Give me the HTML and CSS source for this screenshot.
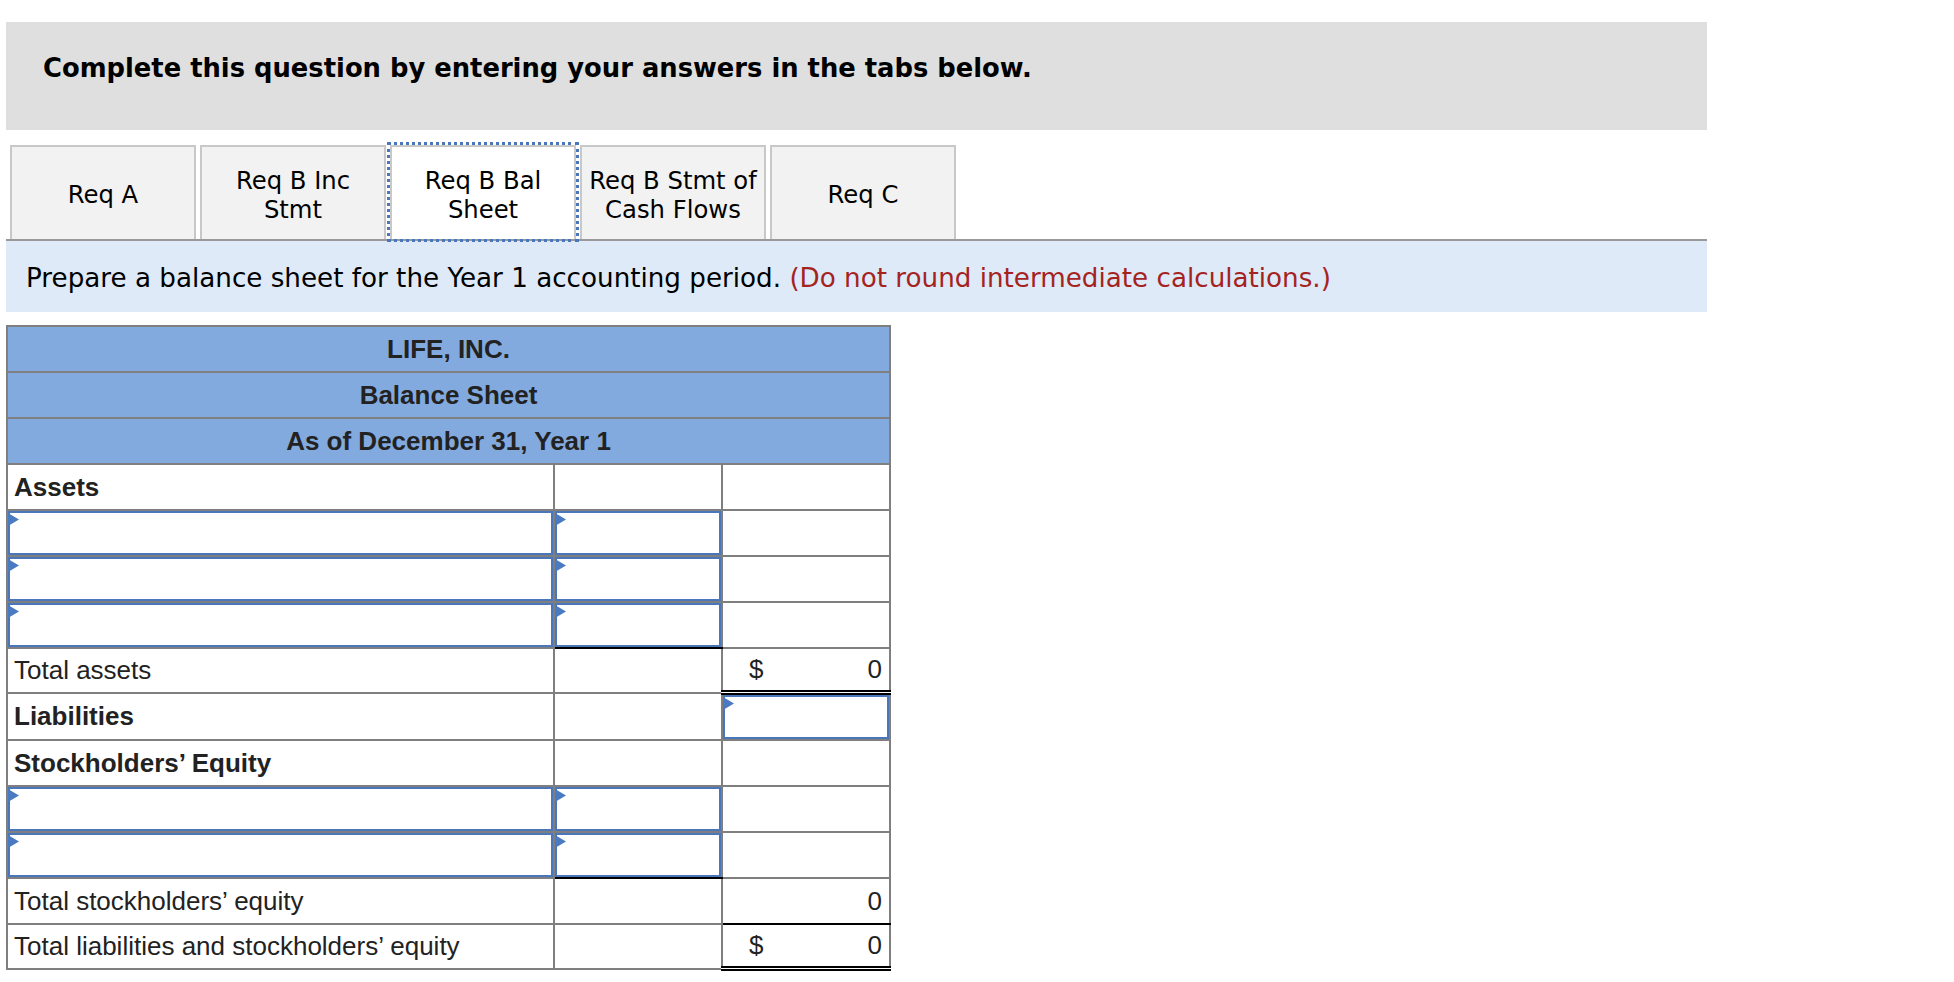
FILE: index.html
```html
<!DOCTYPE html>
<html lang="en">
<head>
<meta charset="utf-8">
<title>Balance Sheet</title>
<link rel="stylesheet" href="styles.css">
</head>
<body>
<div class="page">
  <div class="banner">
    <h1 class="title">Complete this question by entering your answers in the tabs below.</h1>
  </div>

  <div class="tabs">
    <div class="tab">Req A</div>
    <div class="tab">Req B Inc<br>Stmt</div>
    <div class="tab active">Req B Bal<br>Sheet</div>
    <div class="tab">Req B Stmt of<br>Cash Flows</div>
    <div class="tab">Req C</div>
  </div>

  <div class="instr">Prepare a balance sheet for the Year 1 accounting period.&nbsp;<span class="red">(Do not round intermediate calculations.)</span></div>

  <table class="bs">
    <colgroup>
      <col class="c1">
      <col class="c2">
      <col class="c3">
    </colgroup>
    <tr><td class="hd" colspan="3">LIFE, INC.</td></tr>
    <tr><td class="hd" colspan="3">Balance Sheet</td></tr>
    <tr><td class="hd" colspan="3">As of December 31, Year 1</td></tr>

    <tr><td class="lbl b">Assets</td><td></td><td></td></tr>
    <tr>
      <td class="in"><div class="box"><svg class="tri" width="11" height="13" viewBox="0 0 11 13"><polygon points="0,0 11,6.5 0,13"/></svg></div></td>
      <td class="in"><div class="box"><svg class="tri" width="11" height="13" viewBox="0 0 11 13"><polygon points="0,0 11,6.5 0,13"/></svg></div></td>
      <td></td>
    </tr>
    <tr>
      <td class="in"><div class="box"><svg class="tri" width="11" height="13" viewBox="0 0 11 13"><polygon points="0,0 11,6.5 0,13"/></svg></div></td>
      <td class="in"><div class="box"><svg class="tri" width="11" height="13" viewBox="0 0 11 13"><polygon points="0,0 11,6.5 0,13"/></svg></div></td>
      <td></td>
    </tr>
    <tr>
      <td class="in"><div class="box"><svg class="tri" width="11" height="13" viewBox="0 0 11 13"><polygon points="0,0 11,6.5 0,13"/></svg></div></td>
      <td class="in ulb"><div class="box"><svg class="tri" width="11" height="13" viewBox="0 0 11 13"><polygon points="0,0 11,6.5 0,13"/></svg></div></td>
      <td></td>
    </tr>
    <tr class="tot">
      <td class="lbl">Total assets</td>
      <td></td>
      <td class="amt dbl"><div class="amtrow"><span>$</span><span>0</span></div></td>
    </tr>
    <tr>
      <td class="lbl b">Liabilities</td>
      <td></td>
      <td class="in"><div class="box"><svg class="tri" width="11" height="13" viewBox="0 0 11 13"><polygon points="0,0 11,6.5 0,13"/></svg></div></td>
    </tr>
    <tr><td class="lbl b">Stockholders’ Equity</td><td></td><td></td></tr>
    <tr>
      <td class="in"><div class="box"><svg class="tri" width="11" height="13" viewBox="0 0 11 13"><polygon points="0,0 11,6.5 0,13"/></svg></div></td>
      <td class="in"><div class="box"><svg class="tri" width="11" height="13" viewBox="0 0 11 13"><polygon points="0,0 11,6.5 0,13"/></svg></div></td>
      <td></td>
    </tr>
    <tr>
      <td class="in"><div class="box"><svg class="tri" width="11" height="13" viewBox="0 0 11 13"><polygon points="0,0 11,6.5 0,13"/></svg></div></td>
      <td class="in ulb"><div class="box"><svg class="tri" width="11" height="13" viewBox="0 0 11 13"><polygon points="0,0 11,6.5 0,13"/></svg></div></td>
      <td></td>
    </tr>
    <tr>
      <td class="lbl">Total stockholders’ equity</td>
      <td></td>
      <td class="amt ulb"><div class="amtrow end"><span>0</span></div></td>
    </tr>
    <tr class="tot">
      <td class="lbl">Total liabilities and stockholders’ equity</td>
      <td></td>
      <td class="amt dbl"><div class="amtrow"><span>$</span><span>0</span></div></td>
    </tr>
  </table>
</div>
</body>
</html>
```

FILE: styles.css
```css
* { box-sizing: border-box; }

html, body {
  margin: 0;
  background: #ffffff;
}

.page {
  width: 1707px;
  padding: 22px 0 0 6px;
}

.banner {
  height: 108px;
  background: #dfdfdf;
  padding: 31px 0 0 37px;
}

.title {
  margin: 0;
  font-family: "DejaVu Sans", Verdana, sans-serif;
  font-weight: bold;
  font-size: 25.8px;
  line-height: 30px;
  color: #000;
}

.tabs {
  margin-top: 15px;
  display: flex;
  gap: 4px;
  padding-left: 4px;
  border-bottom: 2px solid #999999;
}

.tab {
  width: 186px;
  height: 94px;
  border: 2px solid #c8c8c8;
  border-bottom: 0;
  background: #f2f2f2;
  padding-top: 3px;
  display: flex;
  align-items: center;
  justify-content: center;
  text-align: center;
  font-family: "DejaVu Sans", Verdana, sans-serif;
  font-size: 24.3px;
  line-height: 29px;
  color: #000;
}

.tab.active {
  background: #ffffff;
  outline: 3px dotted #4a76bb;
}

.instr {
  height: 71px;
  background: #deeaf7;
  padding: 2px 0 0 20px;
  display: flex;
  align-items: center;
  font-family: "DejaVu Sans", Verdana, sans-serif;
  font-size: 26.2px;
  color: #000;
  white-space: nowrap;
}

.red { color: #a5231f; }

.bs {
  margin-top: 13px;
  width: 883px;
  border-collapse: collapse;
  table-layout: fixed;
  font-family: "Liberation Sans", Arial, sans-serif;
  font-size: 26px;
  color: #222;
}

.c1 { width: 547px; }
.c2 { width: 168px; }
.c3 { width: 168px; }

.bs td {
  border: 2px solid #7f7f7f;
  height: 46px;
  padding: 0 6px;
  vertical-align: middle;
  white-space: nowrap;
}

.bs tr.tot td { height: 44.5px; }

.bs td.hd {
  background: #82aadf;
  text-align: center;
  font-weight: bold;
}

.bs td.b { font-weight: bold; }

.bs td.in { padding: 0; }

.box {
  height: 44px;
  border: 2px solid #4a76bb;
  background: #fff;
}

.tri {
  display: block;
  margin-left: -2px;
  fill: #4a7bc2;
}

.bs td.ulb { border-bottom: 2px solid #000; }

.bs td.dbl { border-bottom: 5px double #000; }

.bs td.amt { padding: 0 7px 0 26px; }

.amtrow {
  display: flex;
  justify-content: space-between;
}

.amtrow.end { justify-content: flex-end; }
```
